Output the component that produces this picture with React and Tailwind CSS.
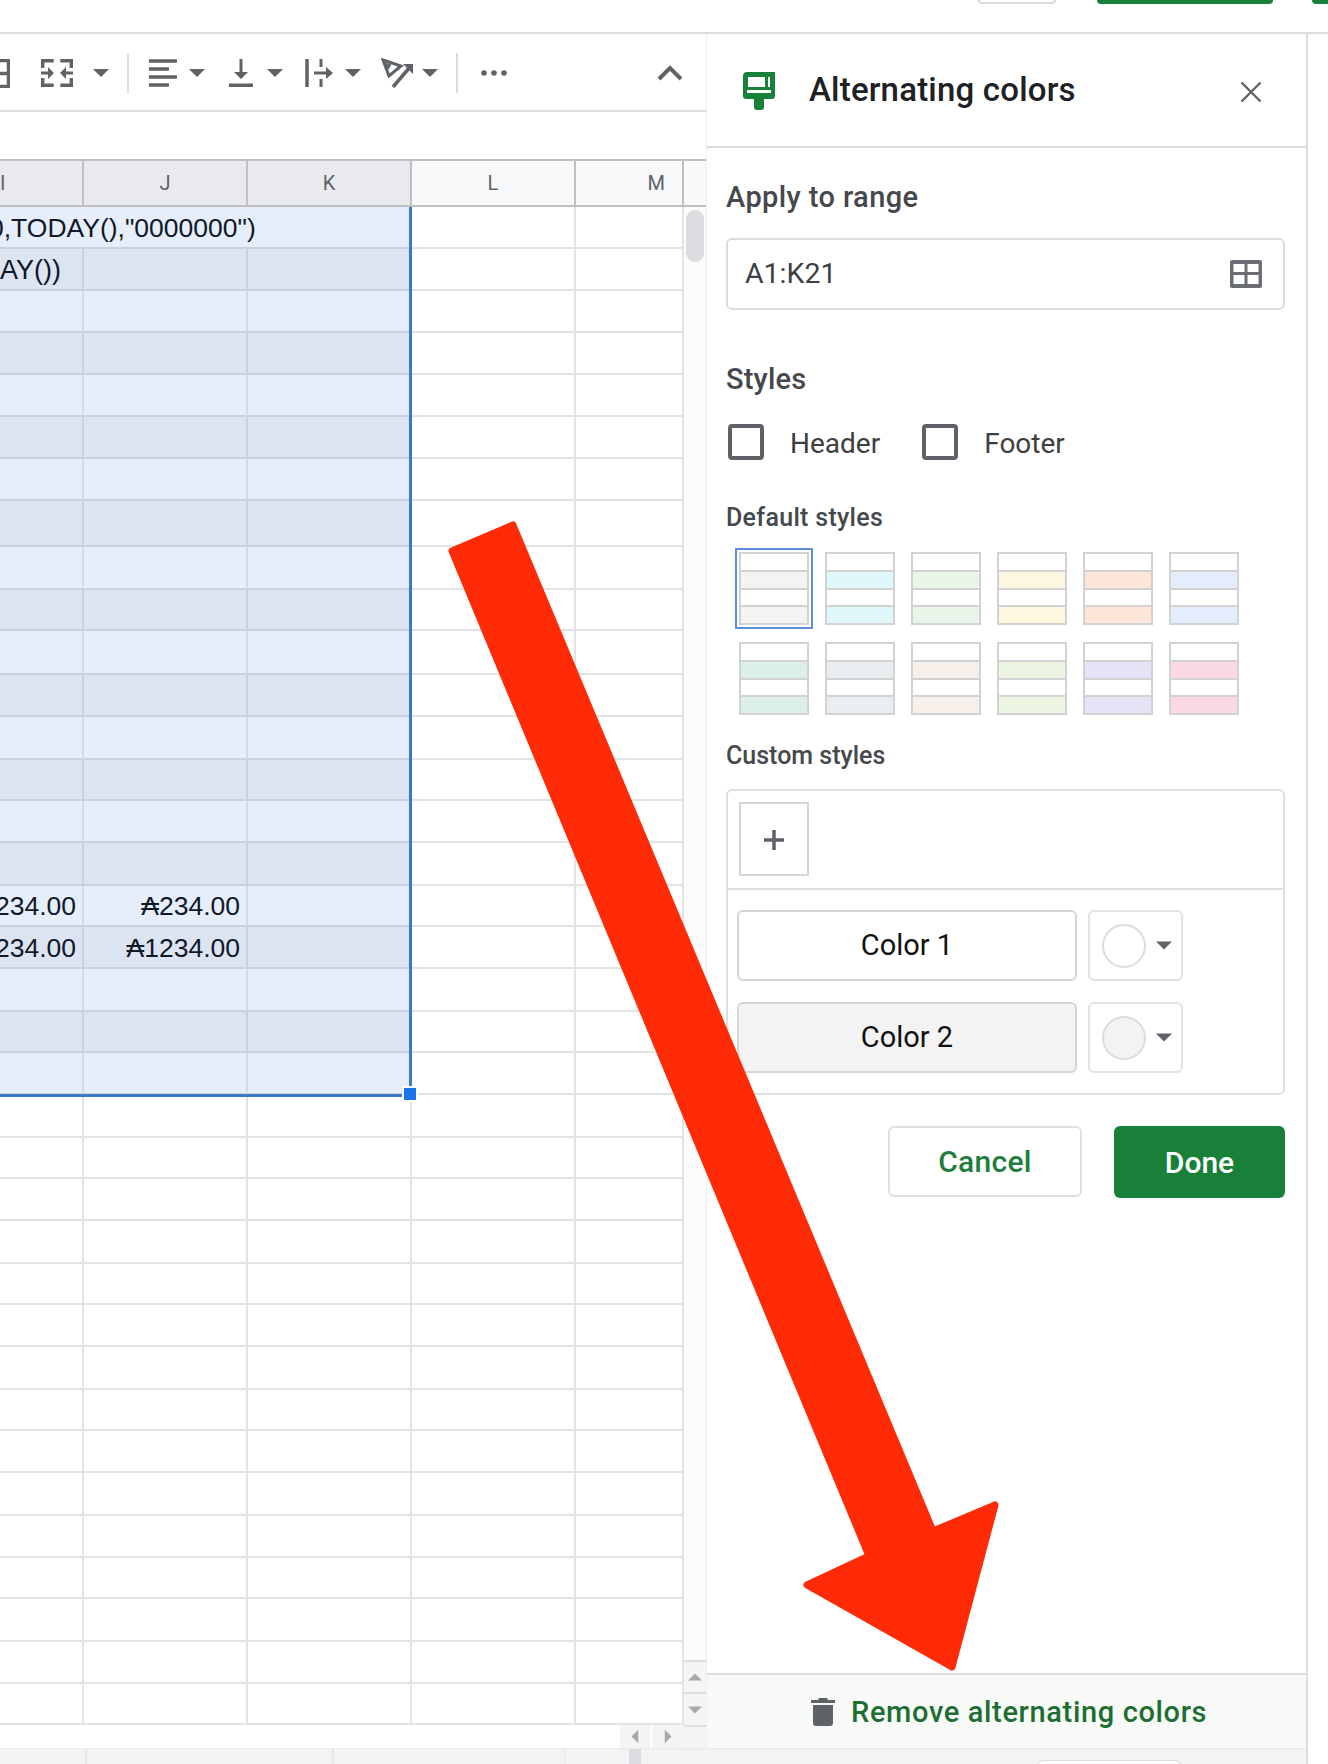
import React from "react";

const H = [42,42,42,42,42,42,42,46,43,41,44,42,43,41,42,43,41,42,43,41,42,43,41,42,43,41,42,43,41,42,43,42,41,43,42,41];

function Caret({ className = "", w = 16, h = 8, fill = "#5f6368" }) {
  return (
    <svg width={w} height={h} viewBox="0 0 16 8" className={className}>
      <path d="M0 0h16L8 8z" fill={fill} />
    </svg>
  );
}

function Toolbar() {
  return (
    <div className="h-[78px] pt-[2px] border-b-2 border-[#dadce0] bg-[#fffffd] flex items-center overflow-hidden shrink-0">
      <svg width="10" height="29" viewBox="0 0 10 29" className="shrink-0 mt-[1px]">
        <path d="M0 1.500h8.500v26H0M0 14.500h8.500" fill="none" stroke="#5f6368" strokeWidth="3.500" />
      </svg>
      <svg width="32" height="28" viewBox="0 0 32 28" className="ml-[31px] shrink-0">
        <path d="M1.700 9V1.700h11M19.300 1.700h11V9M1.700 19v7.300h11M19.300 26.300h11V19" fill="none" stroke="#5f6368" strokeWidth="3.400" />
        <path d="M0 12.500h7V8l6 6-6 6v-4.500H0zM32 12.500h-7V8l-6 6 6 6v-4.500h7z" fill="#5f6368" />
      </svg>
      <Caret className="ml-[20px] shrink-0" />
      <div className="ml-[18px] w-[2px] h-[40px] bg-[#dadce0] shrink-0" />
      <svg width="28" height="28" viewBox="0 0 28 28" className="ml-[20px] shrink-0">
        <path d="M0 2h28M0 10h20M0 18h28M0 26h20" stroke="#5f6368" strokeWidth="3.500" />
      </svg>
      <Caret className="ml-[12px] shrink-0" />
      <svg width="24" height="28" viewBox="0 0 24 28" className="ml-[24px] shrink-0">
        <path d="M12 0v17" stroke="#5f6368" strokeWidth="3" />
        <path d="M5 13h14l-7 7z M0 24.500h24v3.500H0z" fill="#5f6368" />
      </svg>
      <Caret className="ml-[14px] shrink-0" />
      <svg width="28" height="28" viewBox="0 0 28 28" className="ml-[22px] shrink-0">
        <path d="M2 0v28" stroke="#5f6368" strokeWidth="3.500" />
        <path d="M16 0v8M16 20v8" stroke="#5f6368" strokeWidth="3" />
        <path d="M9 14h14" stroke="#5f6368" strokeWidth="3" />
        <path d="M21 8l7 6-7 6z" fill="#5f6368" />
      </svg>
      <Caret className="ml-[12px] shrink-0" />
      <svg width="32" height="30" viewBox="0 0 32 30" className="ml-[20px] shrink-0">
        <path d="M2 2l18 6-12 10z M5 5l1 5M9 6l-3 5" fill="none" stroke="#5f6368" strokeWidth="3" strokeLinejoin="miter" />
        <path d="M12 29L29 9" stroke="#5f6368" strokeWidth="3.500" />
        <path d="M22 6h10v10z" fill="#5f6368" />
      </svg>
      <Caret className="ml-[9px] shrink-0" />
      <div className="ml-[18px] w-[2px] h-[40px] bg-[#dadce0] shrink-0" />
      <svg width="26" height="6" viewBox="0 0 26 6" className="ml-[23px] shrink-0">
        <circle cx="3" cy="3" r="2.800" fill="#5f6368" />
        <circle cx="13" cy="3" r="2.800" fill="#5f6368" />
        <circle cx="23" cy="3" r="2.800" fill="#5f6368" />
      </svg>
      <svg width="26" height="18" viewBox="0 0 26 18" className="ml-[150px] shrink-0">
        <path d="M2 15L13 4l11 11" fill="none" stroke="#5f6368" strokeWidth="4" />
      </svg>
    </div>
  );
}

function HeaderCell({ label, sel, w, pos = "justify-center" }) {
  return (
    <div
      className={`${w} h-full shrink-0 border-r-2 border-[#c0c0c0] flex items-center ${pos} ${sel ? "bg-[#e8eaed]" : "bg-[#f8f9fa]"} text-[#5f6368] text-[20px] font-[Roboto,sans-serif]`}
    >
      {label}
    </div>
  );
}

function Cell({ w, dark, sel, children }) {
  const bg = sel ? (dark ? "bg-[#dde4f1]" : "bg-[#e6eefb]") : "bg-white";
  const border = sel ? (dark ? "border-r-[#c9d1df]" : "border-r-[#d3dbe9]") : "border-r-[#e2e3e3]";
  const bottom = sel ? "border-b-[#c9d1df]" : "border-b-[#e2e3e3]";
  return (
    <div
      className={`${w} shrink-0 h-full border-r-2 border-b-2 ${border} ${bottom} ${bg} flex items-center justify-end pr-[6px] pt-[3px] whitespace-nowrap text-[26.500px] text-[#111827] font-['Liberation_Sans',sans-serif]`}
    >
      {children}
    </div>
  );
}

function Row({ i, h }) {
  const sel = i < 21;
  const dark = i % 2 === 1;
  let first = null;
  let second = null;
  if (i === 16) {
    first = "₳1234.00";
    second = "₳234.00";
  }
  if (i === 17) {
    first = "₳1234.00";
    second = "₳1234.00";
  }
  return (
    <div className="flex" style={{ height: h }}>
      {i === 0 ? (
        <div className="w-[412px] shrink-0 h-full bg-[#e6eefb] border-b-2 border-b-[#c9d1df] flex items-center pt-[4px] whitespace-nowrap text-[26.500px] text-[#111827] font-['Liberation_Sans',sans-serif]">
          <span className="ml-[-11px]">0,TODAY(),"0000000")</span>
        </div>
      ) : (
        <>
          <Cell w="w-[84px]" dark={dark} sel={sel}>
            {i === 1 ? <span className="mr-[15px] text-[27px]">AY())</span> : first}
          </Cell>
          <Cell w="w-[164px]" dark={dark} sel={sel}>{second}</Cell>
          <Cell w="w-[164px]" dark={dark} sel={sel} />
        </>
      )}
      <Cell w="w-[164px]" />
      <Cell w="w-[108px]" />
    </div>
  );
}

function Grid() {
  return (
    <div className="relative flex-1 flex min-h-0">
      <div className="w-[684px] shrink-0 flex flex-col">
        <div className="h-[48px] flex border-t-2 border-b-2 border-[#c0c0c0] shrink-0">
          <HeaderCell label="I" sel w="w-[84px]" pos="justify-start" />
          <HeaderCell label="J" sel w="w-[164px]" />
          <HeaderCell label="K" sel w="w-[164px]" />
          <HeaderCell label="L" w="w-[164px]" />
          <HeaderCell label="M" w="w-[108px]" pos="justify-end pr-[17px]" />
        </div>
        {H.map((h, i) => (
          <Row key={i} i={i} h={h} />
        ))}
        <div className="h-[23px] flex justify-end bg-white">
          <div className="w-[32px] bg-[#f4f4f4] border-r-2 border-white flex items-center justify-center">
            <Caret className="rotate-90" w={14} h={7} fill="#a8a8a8" />
          </div>
          <div className="w-[32px] bg-[#f4f4f4] flex items-center justify-center">
            <Caret className="-rotate-90" w={14} h={7} fill="#a8a8a8" />
          </div>
        </div>
      </div>
      <div className="w-[22px] shrink-0 flex flex-col bg-[#fcfcfc] border-t-2 border-[#c0c0c0]">
        <div className="h-[46px] bg-[#f8f9fa] border-b-2 border-[#c0c0c0] shrink-0" />
        <div className="mt-[3px] mx-[2px] h-[52px] w-[18px] rounded-[9px] bg-[#dadce0] shrink-0" />
        <div className="mt-auto h-[32px] bg-[#f5f5f5] border-t-2 border-[#dddddd] flex items-center justify-center shrink-0">
          <Caret className="rotate-180" w={14} h={8} fill="#a8a8a8" />
        </div>
        <div className="h-[33px] bg-[#f5f5f5] border-t-2 border-[#dddddd] flex items-center justify-center shrink-0">
          <Caret w={14} h={8} fill="#a8a8a8" />
        </div>
        <div className="h-[23px] bg-[#f5f5f5] border-t-2 border-[#dddddd] shrink-0" />
      </div>

      {/* selection outline */}
      <div className="absolute left-0 top-[48px] w-[412px] h-[890px] border-r-[3px] border-b-[3px] border-[#3b78c7] pointer-events-none" />
      <div className="absolute left-[402px] top-[927px] w-[16px] h-[16px] bg-white pointer-events-none flex items-center justify-center">
        <div className="w-[12px] h-[12px] bg-[#1a73e8]" />
      </div>
    </div>
  );
}

const SWATCHES = [
  "bg-[#f3f3f3]", "bg-[#e0f7fa]", "bg-[#e8f5e9]", "bg-[#fff8e1]", "bg-[#fde5da]", "bg-[#e4edfb]",
  "bg-[#dcefeb]", "bg-[#e9eef0]", "bg-[#f7f0ea]", "bg-[#ecf5e2]", "bg-[#e5e3f6]", "bg-[#fad9e5]",
];

function Swatch({ color, selected }) {
  return (
    <div className="relative w-[70px] h-[73px] shrink-0 border-2 border-[#d2d2d2] flex flex-col bg-white">
      <div className="flex-1" />
      <div className={`flex-1 border-t-2 border-[#d2d2d2] ${color}`} />
      <div className="flex-1 border-t-2 border-[#d2d2d2]" />
      <div className={`flex-1 border-t-2 border-[#d2d2d2] ${color}`} />
      {selected && <div className="absolute left-[-6px] top-[-6px] w-[78px] h-[81px] border-2 border-[#5b8fdb]" />}
    </div>
  );
}

function ColorRow({ label, fill, circle, mt }) {
  return (
    <div className={`flex ${mt}`}>
      <div className={`w-[340px] h-[71px] rounded-[6px] border-2 border-[#d5d5d5] ${fill} flex items-center justify-center text-[29px] text-[#111]`}>
        {label}
      </div>
      <div className="ml-[11px] w-[95px] h-[71px] rounded-[6px] border-2 border-[#e2e2e2] bg-white flex items-center">
        <div className={`ml-[12px] w-[44px] h-[44px] rounded-full border-2 border-[#dcdcdc] ${circle}`} />
        <Caret className="ml-[10px]" w={16} h={9} />
      </div>
    </div>
  );
}

function Panel() {
  return (
    <div className="w-[600px] shrink-0 bg-white flex flex-col font-[Roboto,sans-serif] border-l border-[#f0f0f0]">
      <div className="h-[114px] shrink-0 border-b-2 border-[#dadce0] flex items-center">
        <svg width="32" height="38" viewBox="0 0 32 38" className="ml-[36px] shrink-0 mb-[-2px]">
          <path
            fillRule="evenodd"
            d="M4 0h28v24a3 3 0 0 1-3 3h-8v8a3 3 0 0 1-3 3h-4a3 3 0 0 1-3-3v-8H3a3 3 0 0 1-3-3V4a4 4 0 0 1 4-4zM5 5v10h17V5zM25 5v10h2V5zM4 18v3h24v-3z"
            fill="#188038"
          />
        </svg>
        <div className="ml-[34px] text-[33px] leading-[40px] font-medium text-[#202124] whitespace-nowrap tracking-[0.2px]">Alternating colors</div>
        <svg width="22" height="22" viewBox="0 0 22 22" className="ml-auto mr-[44px] mt-[4px] shrink-0">
          <path d="M1.500 1.500l19 19M20.500 1.500l-19 19" stroke="#5f6368" strokeWidth="2.400" />
        </svg>
      </div>

      <div className="pl-[19px]">
        <div className="mt-[29px] h-[40px] leading-[40px] text-[29px] font-medium text-[#45484c] tracking-[0.4px]">Apply to range</div>
        <div className="mt-[21px] h-[72px] w-[559px] rounded-[6px] border-2 border-[#dadce0] flex items-center pl-[17px] pr-[21px] text-[28.500px] text-[#3c4043]">
          <span className="mt-[1px]">A1:K21</span>
          <svg width="32" height="28" viewBox="0 0 32 28" className="ml-auto">
            <path fillRule="evenodd" d="M2 0h28a2 2 0 0 1 2 2v24a2 2 0 0 1-2 2H2a2 2 0 0 1-2-2V2a2 2 0 0 1 2-2zM3.500 4v8h11V4zM17.500 4v8h11V4zM3.500 15v9h11v-9zM17.500 15v9h11v-9z" fill="#6b6f73" />
          </svg>
        </div>

        <div className="mt-[49px] h-[40px] leading-[40px] text-[29px] font-medium text-[#45484c] tracking-[0.2px]">Styles</div>
        <div className="mt-[25px] h-[36px] flex items-center text-[28px] text-[#3c4043]">
          <div className="ml-[2px] w-[36px] h-[36px] rounded-[4px] border-4 border-[#5f6368]" />
          <span className="ml-[26px] mt-[3px]">Header</span>
          <div className="ml-[42px] w-[36px] h-[36px] rounded-[4px] border-4 border-[#5f6368]" />
          <span className="ml-[26px] mt-[3px]">Footer</span>
        </div>

        <div className="mt-[40px] h-[36px] leading-[36px] text-[25px] font-medium text-[#45484c] tracking-[0.3px]">Default styles</div>
        <div className="mt-[16px] ml-[13px] flex gap-[16px]">
          {SWATCHES.slice(0, 6).map((c, i) => (
            <Swatch key={c} color={c} selected={i === 0} />
          ))}
        </div>
        <div className="mt-[17px] ml-[13px] flex gap-[16px]">
          {SWATCHES.slice(6).map((c) => (
            <Swatch key={c} color={c} />
          ))}
        </div>

        <div className="mt-[23px] h-[36px] leading-[36px] text-[25px] font-medium text-[#45484c]">Custom styles</div>
        <div className="mt-[15px] w-[559px] h-[306px] rounded-[6px] border-2 border-[#dfdfdf] bg-white">
          <div className="h-[99px] border-b-2 border-[#dfdfdf] pt-[11px] pl-[11px]">
            <div className="w-[70px] h-[74px] border-2 border-[#d5d5d5] flex items-center justify-center">
              <svg width="20" height="20" viewBox="0 0 20 20" className="mt-[2px]">
                <path d="M10 0v20M0 10h20" stroke="#5f6368" strokeWidth="3.500" />
              </svg>
            </div>
          </div>
          <div className="pt-[20px] pl-[9px]">
            <ColorRow label="Color 1" fill="bg-white" circle="bg-white" mt="" />
            <ColorRow label="Color 2" fill="bg-[#f3f3f3]" circle="bg-[#f3f3f3]" mt="mt-[21px]" />
          </div>
        </div>
        <div className="mt-[31px] w-[559px] flex justify-end">
          <div className="w-[194px] h-[71px] rounded-[6px] border-2 border-[#dfdfdf] bg-white flex items-center justify-center text-[30px] font-medium tracking-[0.3px] text-[#1e7e3e]">Cancel</div>
          <div className="ml-[32px] w-[171px] h-[72px] rounded-[6px] bg-[#188038] flex items-center justify-center text-[30px] font-medium text-white">Done</div>
        </div>
      </div>

      <div className="mt-auto h-[75px] shrink-0 border-t-2 border-[#dadce0] bg-[#f8faf8] flex items-center pl-[104px]">
        <svg width="24" height="28" viewBox="0 0 24 28" className="shrink-0">
          <path d="M8 0h8l1 2h7v3H0V2h7zM2 7h20v18a3 3 0 0 1-3 3H5a3 3 0 0 1-3-3z" fill="#5f6368" />
        </svg>
        <span className="ml-[16px] mt-[3px] text-[29px] font-medium text-[#1e6e34] whitespace-nowrap tracking-[0.65px]">Remove alternating colors</span>
      </div>
    </div>
  );
}

export default function App() {
  return (
    <div className="relative w-[1328px] h-[1764px] overflow-hidden bg-white flex flex-col">
      <div className="h-[34px] shrink-0 border-b-2 border-[#dadce0] flex items-start">
        <div className="ml-[978px] w-[78px] h-[4px] rounded-b-[20px] border-2 border-t-0 border-[#dadce0]" />
        <div className="ml-[41px] w-[176px] h-[4px] rounded-b-[4px] bg-[#188038]" />
        <div className="ml-[39px] w-[16px] h-[4px] rounded-bl-[14px] bg-[#188038]" />
      </div>
      <div className="flex-1 flex min-h-0">
        <div className="w-[1308px] shrink-0 flex flex-col border-r-2 border-[#dadce0]">
          <div className="flex-1 flex min-h-0">
            <div className="w-[706px] shrink-0 flex flex-col">
              <Toolbar />
              <div className="h-[47px] bg-white shrink-0" />
              <Grid />
            </div>
            <Panel />
          </div>
          <div className="h-[16px] shrink-0 bg-[#f1f3f4] border-t border-[#e8eaed] flex relative">
            <div className="ml-[85px] w-[2px] h-full bg-[#e4e6e8]" />
            <div className="ml-[245px] w-[2px] h-full bg-[#e4e6e8]" />
            <div className="ml-[230px] w-[1px] h-full bg-[#e4e6e8]" />
            <div className="ml-[64px] w-[12px] h-full bg-[#dadce0]" />
            <div className="ml-[395px] mt-[11px] w-[146px] h-[8px] rounded-t-[8px] bg-white border border-[#dadce0]" />
          </div>
        </div>
      </div>

      <svg width="1328" height="1764" viewBox="0 0 1328 1764" className="absolute left-0 top-0 pointer-events-none">
        <polygon
          points="452,551 513,525 933,1531 995,1505 952,1667 807,1585 869,1556"
          fill="#ff2a06"
          stroke="#ff2a06"
          strokeWidth="7"
          strokeLinejoin="round"
        />
      </svg>
    </div>
  );
}
